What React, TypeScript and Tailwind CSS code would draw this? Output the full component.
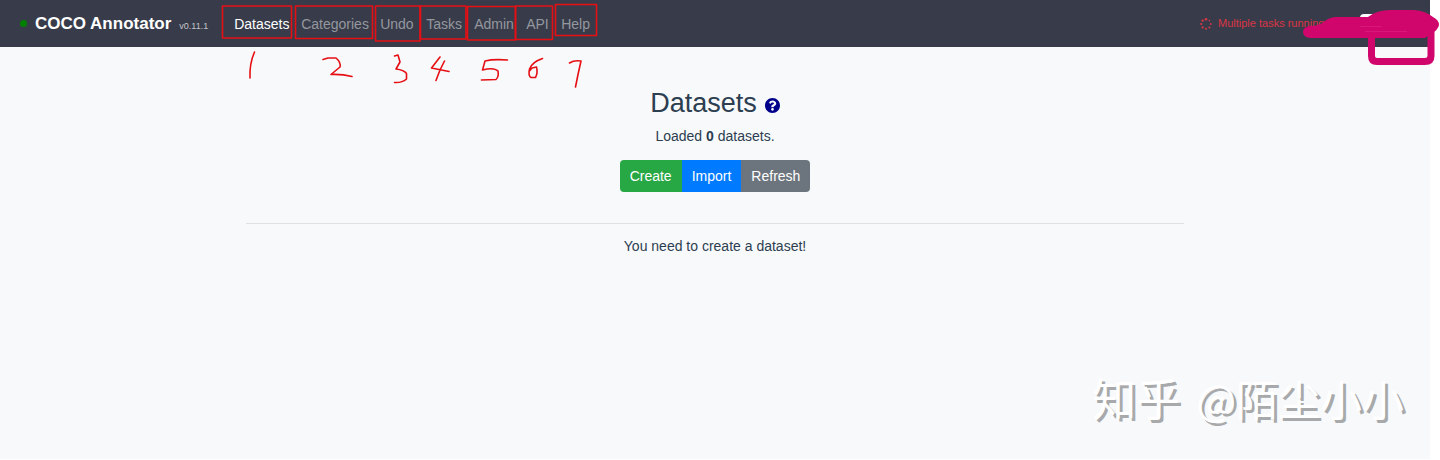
import React from "react";

const links = [
  { label: "Datasets", width: "w-[67px]" },
  { label: "Categories", width: "w-[79px]" },
  { label: "Undo", width: "w-[46px]" },
  { label: "Tasks", width: "w-[48px]" },
  { label: "Admin", width: "w-[52px]" },
  { label: "API", width: "w-[35px]" },
  { label: "Help", width: "w-[40px]" },
];

function Spinner() {
  return (
    <svg className="size-3" viewBox="0 0 12 12" fill="#dc3545" aria-hidden="true">
      <circle cx="6" cy="1.3" r="1.3" />
      <circle cx="9.4" cy="2.6" r="0.8" />
      <circle cx="10.8" cy="6" r="0.9" />
      <circle cx="9.4" cy="9.4" r="1" />
      <circle cx="6" cy="10.8" r="1" />
      <circle cx="2.6" cy="9.4" r="1.1" />
      <circle cx="1.2" cy="6" r="1.1" />
      <circle cx="2.6" cy="2.6" r="1.2" />
    </svg>
  );
}

function Navbar() {
  return (
    <nav className="flex h-[47px] items-center bg-[#383c4a] pl-5 text-sm text-[#94979e]">
      <span className="size-[7px] rounded-full bg-[#008000]" />
      <a href="#home" className="ml-2 pt-px text-[17px] font-bold text-white">
        COCO Annotator
      </a>
      <span className="ml-2 pt-[6px] text-[9px] text-[#c3c5c9]">v0.11.1</span>
      <ul className="ml-[26px] flex">
        {links.map((link, i) => (
          <li key={link.label} className={link.width}>
            <a href={"#" + link.label.toLowerCase()} className={i === 0 ? "text-white" : ""}>
              {link.label}
            </a>
          </li>
        ))}
      </ul>
      <div className="relative ml-auto flex w-[230px] items-center gap-[6px] whitespace-nowrap pt-px text-[11px] text-[#dc3545]">
        <Spinner />
        <span>Multiple tasks running</span>
        <span className="absolute right-[50px] -top-px h-3 w-5 rounded-sm bg-white" />
      </div>
    </nav>
  );
}

function HelpIcon() {
  return (
    <svg className="size-[15px]" viewBox="8 8 496 496" fill="#00008b" aria-hidden="true">
      <path d="M504 256c0 136.997-111.043 248-248 248S8 392.997 8 256C8 119.083 119.043 8 256 8s248 111.083 248 248zM262.655 90c-54.497 0-89.255 22.957-116.549 63.758-3.536 5.286-2.353 12.415 2.715 16.258l34.699 26.31c5.205 3.947 12.621 3.008 16.665-2.122 17.864-22.658 30.113-35.797 57.303-35.797 20.429 0 45.698 13.148 45.698 32.958 0 14.976-12.363 22.667-32.534 33.976C247.128 238.528 216 254.941 216 296v4c0 6.627 5.373 12 12 12h56c6.627 0 12-5.373 12-12v-1.333c0-28.462 83.186-29.647 83.186-106.667 0-58.002-60.165-102-116.531-102zM256 338c-25.365 0-46 20.635-46 46 0 25.364 20.635 46 46 46s46-20.636 46-46c0-25.365-20.635-46-46-46z" />
    </svg>
  );
}

function RedMarks() {
  return (
    <svg
      className="pointer-events-none absolute top-0 left-0 h-[95px] w-[620px]"
      viewBox="0 0 620 95"
      fill="none"
      stroke="#e60f14"
      strokeWidth="1.6"
      strokeLinecap="round"
      strokeLinejoin="round"
      aria-hidden="true"
    >
      <rect x="222.5" y="6" width="69" height="32" />
      <rect x="295.5" y="6" width="77" height="32.5" />
      <rect x="375.5" y="6" width="44.5" height="35" />
      <rect x="420.5" y="6" width="45.5" height="33" />
      <rect x="467.5" y="6.5" width="48" height="33.5" />
      <rect x="515.5" y="6" width="37" height="33.5" />
      <rect x="555.5" y="4.5" width="41" height="31" />
      <path d="M254.5 52C251 60 249.5 68 250 78" />
      <path d="M323 59.5L328 58L336 58Q341 62 340 67L331 74.5Q342 74 352 76.5" />
      <path d="M394.5 56L398 55L400 62L396 69Q404 70 406.5 73.5L406.5 79Q402 83 394.5 82.5" />
      <path d="M440 57L431.5 68L449 71.5M444.5 61L440 70L436 80.5" />
      <path d="M507.5 60Q493 59 485 61L482.5 70Q494 67 498 71Q499 77 496 79.5L481.5 80" />
      <path d="M542.5 58.5Q532 62 529.5 69Q528 76 531 77.5L535.5 77.5Q538 73 536.5 67L532 68L529.5 71" />
      <path d="M569.5 63Q574 60 581 61Q578 74 575.5 87" />
    </svg>
  );
}

function PinkScribble() {
  return (
    <svg
      className="pointer-events-none absolute top-0 right-0 h-[70px] w-[140px]"
      viewBox="1300 0 140 70"
      aria-hidden="true"
    >
      <path
        d="M1310 26Q1320 26 1325 21Q1330 17 1337 17H1368Q1377 10 1390 10H1414Q1426 11 1433 17Q1439 20 1439 25Q1438 30 1432 33L1425 38H1310Q1303 37 1303 32Q1303 27 1310 26Z"
        fill="#d1066c"
      />
      <path
        d="M1371.5 30V56Q1371.5 61.5 1377 61.5H1425Q1431 61.5 1431 56V30"
        fill="none"
        stroke="#d1066c"
        strokeWidth="7"
      />
      <path d="M1360 26.5H1382M1365 31.5H1407" stroke="#e0358a" strokeWidth="0.4" />
    </svg>
  );
}

export default function App() {
  return (
    <div className="relative flex min-h-screen flex-col bg-white pr-[10px] pb-px font-['Liberation_Sans',Arial,sans-serif] text-[#2c3e50]">
      <div className="flex grow flex-col bg-[#f8f9fb]">
        <Navbar />
        <main className="mx-auto flex w-full max-w-[938px] flex-col items-center pt-9 text-sm">
          <h1 className="flex items-center gap-2 text-[27px] leading-10">
            Datasets
            <button type="button" aria-label="Help" className="mt-1">
              <HelpIcon />
            </button>
          </h1>
          <p className="mt-[3px]">
            Loaded <b>0</b> datasets.
          </p>
          <div className="mt-[14px] flex h-8 overflow-hidden rounded text-white">
            <button type="button" className="bg-[#28a745] px-[10px]">Create</button>
            <button type="button" className="bg-[#007bff] px-[10px]">Import</button>
            <button type="button" className="bg-[#6c757d] px-[10px]">Refresh</button>
          </div>
          <hr className="mt-[31px] w-full border-[#dfe1e4]" />
          <p className="mt-3">You need to create a dataset!</p>
        </main>
      </div>
      <RedMarks />
      <PinkScribble />
      <div className="absolute right-9 bottom-8 flex items-baseline gap-4 font-['Noto_Sans_CJK_SC',sans-serif] text-[42px] leading-[60px] whitespace-nowrap text-white [text-shadow:3px_3px_0_#a8a9ab]">
        <span className="text-[44px]">知乎</span>
        <span>@陌尘小小</span>
      </div>
    </div>
  );
}
